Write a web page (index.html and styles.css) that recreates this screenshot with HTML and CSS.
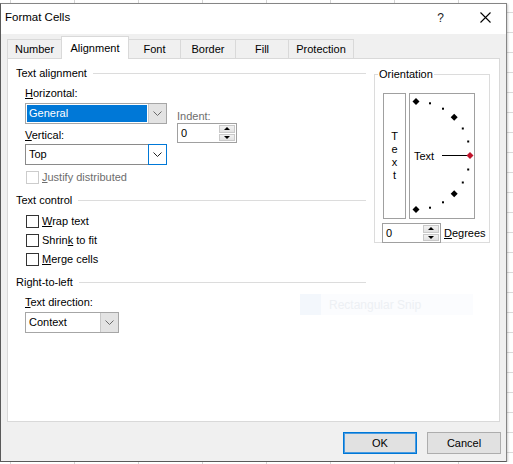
FILE: index.html
```html
<!DOCTYPE html>
<html lang="en">
<head>
  <meta charset="UTF-8">
  <title>Format Cells</title>
  <link rel="stylesheet" href="styles.css">
</head>
<body>
<div class="dialog">
  <div class="titlebar">
    <span class="title">Format Cells</span>
    <span class="help">?</span>
    <svg class="close" width="11" height="11" viewBox="0 0 11 11">
      <path d="M0.5 0.5 L10.5 10.5 M10.5 0.5 L0.5 10.5" stroke="#000" stroke-width="1.1" fill="none"/>
    </svg>
  </div>

  <div class="tabs">
    <div class="tab">Number</div>
    <div class="tab active">Alignment</div>
    <div class="tab">Font</div>
    <div class="tab">Border</div>
    <div class="tab">Fill</div>
    <div class="tab">Protection</div>
  </div>

  <div class="panel">
    <div class="col">
      <div class="grp"><span>Text alignment</span><i></i></div>
      <div class="align-row">
        <div class="align-main">
          <div class="lbl"><u>H</u>orizontal:</div>
          <div class="combo combo-sel">
            <span class="combo-val"><b>General</b></span>
            <span class="combo-btn">
              <svg width="9" height="5" viewBox="0 0 9 5"><path d="M0.5 0.5 L4.5 4.5 L8.5 0.5" stroke="#6a6a6a" fill="none"/></svg>
            </span>
          </div>
          <div class="lbl lbl-v"><u>V</u>ertical:</div>
          <div class="combo combo-hot">
            <span class="combo-val">Top</span>
            <span class="combo-btn">
              <svg width="9" height="5" viewBox="0 0 9 5"><path d="M0.5 0.5 L4.5 4.5 L8.5 0.5" stroke="#222" fill="none"/></svg>
            </span>
          </div>
        </div>
        <div class="indent">
          <div class="lbl dim">Indent:</div>
          <div class="spin">
            <span class="spin-val">0</span>
            <span class="spin-btns"><span class="up"></span><span class="down"></span></span>
          </div>
        </div>
      </div>
      <div class="chk dim chk-justify"><span class="box"></span><span><u>J</u>ustify distributed</span></div>

      <div class="grp grp-ctl"><span>Text control</span><i></i></div>
      <div class="chk chk-first"><span class="box"></span><span><u>W</u>rap text</span></div>
      <div class="chk"><span class="box"></span><span>Shrin<u>k</u> to fit</span></div>
      <div class="chk"><span class="box"></span><span><u>M</u>erge cells</span></div>

      <div class="grp grp-rtl"><span>Right-to-left</span><i></i></div>
      <div class="lbl lbl-dir"><u>T</u>ext direction:</div>
      <div class="combo combo-short">
        <span class="combo-val">Context</span>
        <span class="combo-btn">
          <svg width="9" height="5" viewBox="0 0 9 5"><path d="M0.5 0.5 L4.5 4.5 L8.5 0.5" stroke="#6a6a6a" fill="none"/></svg>
        </span>
      </div>
    </div>

    <div class="orient">
      <div class="orient-title">Orientation</div>
      <div class="orient-boxes">
        <div class="vtext"><span>T</span><span>e</span><span>x</span><span>t</span></div>
        <div class="dial">
          <svg width="64" height="124" viewBox="0 0 64 124">
            <!-- big marks every 45 degrees -->
            <g fill="#000">
              <polygon points="6,4 9.5,7.5 6,11 2.5,7.5"/>
              <polygon points="44.2,19.8 47.7,23.3 44.2,26.8 40.7,23.3"/>
              <polygon points="44.2,96.2 47.7,99.7 44.2,103.2 40.7,99.7"/>
              <polygon points="6,112 9.5,115.5 6,119 2.5,115.5"/>
              <!-- small marks every 15 degrees -->
              <rect x="19" y="8.3" width="2" height="2"/>
              <rect x="32" y="13.7" width="2" height="2"/>
              <rect x="51.8" y="33.5" width="2" height="2"/>
              <rect x="57.2" y="46.5" width="2" height="2"/>
              <rect x="57.2" y="74.5" width="2" height="2"/>
              <rect x="51.8" y="87.5" width="2" height="2"/>
              <rect x="32" y="107.3" width="2" height="2"/>
              <rect x="19" y="112.7" width="2" height="2"/>
            </g>
            <line x1="32" y1="61.5" x2="57" y2="61.5" stroke="#000" stroke-width="1"/>
            <polygon points="60,58 63.5,61.5 60,65 56.5,61.5" fill="#c0142c"/>
            <text x="4" y="66" class="dial-text">Text</text>
          </svg>
        </div>
      </div>
      <div class="deg-row">
        <div class="spin spin-deg">
          <span class="spin-val">0</span>
          <span class="spin-btns"><span class="up"></span><span class="down"></span></span>
        </div>
        <span class="deg-lbl"><u>D</u>egrees</span>
      </div>
    </div>
  </div>

  <div class="buttons">
    <div class="btn btn-default">OK</div>
    <div class="btn">Cancel</div>
  </div>
</div>

<!-- leftover snipping tool toast, almost faded out -->
<div class="snip"><span class="snip-ico"></span><span>Rectangular Snip</span></div>
</body>
</html>
```

FILE: styles.css
```css
body {
  margin: 0;
  font-family: "Liberation Sans", Arial, sans-serif;
  font-size: 11px;
  color: #000;
  background-color: #fff;
  background-image:
    linear-gradient(to right, #d4d4d4 1px, transparent 1px),
    linear-gradient(to bottom, #dadada 1px, transparent 1px);
  background-size: 64px 20px;
  background-position: 10px 12px;
}

u {
  text-decoration: underline;
  text-underline-offset: 1px;
}

/* window frame */
.dialog {
  box-sizing: border-box;
  width: 507px;
  height: 459px;
  margin-top: 3px;
  border: 1px solid #858585;
  border-left-color: #5a5a5a;
  border-bottom-color: #5a5a5a;
  background: #f0f0f0;
  display: flex;
  flex-direction: column;
  box-shadow: 1px 1px 2px rgba(0, 0, 0, 0.2);
}

.titlebar {
  height: 30px;
  flex: none;
  box-sizing: border-box;
  background: #fff;
  display: flex;
  align-items: flex-start;
  padding: 6px 15px 0 4px;
}
.title {
  flex: 1;
  font-size: 11.5px;
  line-height: 14px;
}
.help {
  font-size: 12px;
  line-height: 14px;
  color: #222;
  margin-right: 36px;
  margin-top: 1px;
}
.close {
  margin-top: 2px;
}

/* tab strip */
.tabs {
  height: 24px;
  flex: none;
  display: flex;
  align-items: flex-end;
  padding-left: 6px;
}
.tab {
  box-sizing: border-box;
  height: 19px;
  border: 1px solid #d9d9d9;
  border-bottom: none;
  margin-right: -1px;
  text-align: center;
  line-height: 18px;
  background: #f0f0f0;
}
.tab:nth-child(1) { width: 55px; }
.tab:nth-child(2) { width: 68px; }
.tab:nth-child(3) { width: 53px; }
.tab:nth-child(4) { width: 56px; }
.tab:nth-child(5) { width: 54px; }
.tab:nth-child(6) { width: 66px; }
.tab.active {
  height: 23px;
  margin-bottom: -1px;
  background: #fff;
  position: relative;
  z-index: 1;
  line-height: 22px;
}

.panel {
  box-sizing: border-box;
  height: 364px;
  flex: none;
  margin: 0 6px;
  border: 1px solid #d9d9d9;
  background: #fff;
  padding: 7px 0 0 8px;
  display: flex;
  gap: 8px;
  align-items: flex-start;
}

/* left column */
.col {
  width: 350px;
}
.grp {
  display: flex;
  align-items: center;
  line-height: 14px;
}
.grp i {
  flex: 1;
  height: 1px;
  background: #dcdcdc;
  margin-left: 6px;
}
.grp-ctl { margin-top: 9px; }
.grp-rtl { margin-top: 9px; }

.lbl {
  line-height: 14px;
  padding-left: 9px;
}
.dim { color: #6d6d6d; }

.align-row {
  display: flex;
  margin-top: 6px;
}
.align-main {
  width: 151px;
}
.lbl-v { margin-top: 4px; }
.indent {
  margin-left: 10px;
  padding-top: 23px;
}
.indent .lbl { padding-left: 0; }

.combo {
  box-sizing: border-box;
  width: 142px;
  height: 21px;
  margin: 3px 0 0 9px;
  border: 1px solid #a6a6a6;
  display: flex;
  background: #fff;
}
.combo-val {
  flex: 1;
  padding: 1px;
  display: flex;
}
.combo-val b {
  flex: 1;
  font-weight: normal;
  background: #0078d7;
  color: #fff;
  padding-left: 2px;
  line-height: 17px;
}
.combo-btn {
  width: 17px;
  display: flex;
  align-items: center;
  justify-content: center;
  background: #e3e3e3;
  border-left: 1px solid #c8c8c8;
}
.combo-hot {
  margin-top: 2px;
  border-color: #8a8a8a;
}
.combo-hot .combo-val {
  padding: 0 0 0 3px;
  line-height: 19px;
}
.combo-hot .combo-btn {
  margin: -1px -1px -1px 0;
  border: 1px solid #0078d7;
  background: #fff;
}
.combo-short {
  width: 94px;
}
.combo-short .combo-val {
  padding: 0 0 0 3px;
  line-height: 19px;
}

/* checkboxes */
.chk {
  display: flex;
  align-items: center;
  line-height: 14px;
  padding-left: 10px;
  margin-top: 5px;
}
.chk .box {
  box-sizing: border-box;
  width: 13px;
  height: 13px;
  border: 1px solid #333;
  background: #fff;
  margin-right: 3px;
}
.chk.dim .box { border-color: #cccccc; }
.chk-justify { margin-top: 5px; }
.chk-first { margin-top: 7px; }
.lbl-dir { margin-top: 6px; }

/* spinner boxes */
.spin {
  box-sizing: border-box;
  width: 60px;
  height: 20px;
  border: 1px solid #a0a0a0;
  display: flex;
  background: #fff;
}
.spin-val {
  flex: 1;
  padding-left: 3px;
  line-height: 18px;
}
.spin-btns {
  width: 16px;
  margin: 1px 1px 1px 0;
  display: flex;
  flex-direction: column;
  gap: 1px;
}
.spin-btns span {
  flex: 1;
  background: linear-gradient(#f2f2f2, #e2e2e2);
  border: 1px solid #c9c9c9;
  display: flex;
  align-items: center;
  justify-content: center;
}
.spin-btns .up::after {
  content: "";
  border: 3px solid transparent;
  border-bottom: 3px solid #000;
  border-top: none;
}
.spin-btns .down::after {
  content: "";
  border: 3px solid transparent;
  border-top: 3px solid #000;
  border-bottom: none;
}

/* orientation group */
.orient {
  box-sizing: border-box;
  width: 116px;
  height: 169px;
  margin-top: 8px;
  border: 1px solid #dcdcdc;
  padding: 0 0 0 7px;
}
.orient-title {
  display: inline-block;
  line-height: 14px;
  margin: -8px 0 0 -4px;
  padding: 0 1px;
  background: #fff;
  vertical-align: top;
}
.orient-boxes {
  display: flex;
  gap: 3px;
  margin-top: 6px;
  padding-left: 1px;
}
.vtext {
  box-sizing: border-box;
  width: 23px;
  height: 126px;
  border: 1px solid #a0a0a0;
  display: flex;
  flex-direction: column;
  align-items: center;
  justify-content: center;
  line-height: 13px;
}
.dial {
  box-sizing: border-box;
  width: 66px;
  height: 126px;
  border: 1px solid #a0a0a0;
}
.dial svg { display: block; }
.dial-text {
  font-family: "Liberation Sans", Arial, sans-serif;
  font-size: 11px;
  fill: #000;
}
.deg-row {
  display: flex;
  align-items: center;
  margin-top: 4px;
}
.spin-deg { width: 59px; }
.deg-lbl { margin-left: 3px; }

/* bottom buttons */
.buttons {
  flex: 1;
  display: flex;
  justify-content: flex-end;
  align-items: flex-start;
  gap: 10px;
  padding: 10px 5px 0 0;
}
.btn {
  box-sizing: border-box;
  width: 74px;
  height: 22px;
  border: 1px solid #adadad;
  background: #e1e1e1;
  text-align: center;
  line-height: 20px;
}
.btn-default {
  border-color: #0078d7;
  box-shadow: inset 0 0 0 1px #4a9be0;
}

.snip {
  position: absolute;
  left: 300px;
  top: 294px;
  width: 173px;
  height: 21px;
  display: flex;
  align-items: center;
  gap: 8px;
  background: #fbfcfe;
  color: #edf0f4;
  font-size: 12px;
}
.snip-ico {
  width: 21px;
  height: 21px;
  background: #f3f7fc;
}
```
